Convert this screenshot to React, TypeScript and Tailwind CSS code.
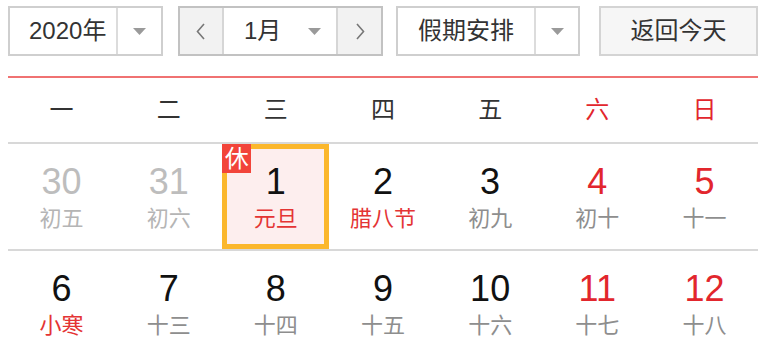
import React from "react";

type Cell = {
  d: string;
  l: string;
  dc: string;
  lc: string;
  sel?: boolean;
};

const BLACK = "text-[#111111]";
const RED = "text-[#e2262d]";
const GRAY = "text-[#bdbdbd]";
const LGRAY = "text-[#8e8e8e]";
const LRED = "text-[#e43434]";

const rows: Cell[][] = [
  [
    { d: "30", l: "初五", dc: GRAY, lc: "text-[#b5b5b5]" },
    { d: "31", l: "初六", dc: GRAY, lc: "text-[#b5b5b5]" },
    { d: "1", l: "元旦", dc: BLACK, lc: LRED, sel: true },
    { d: "2", l: "腊八节", dc: BLACK, lc: LRED },
    { d: "3", l: "初九", dc: BLACK, lc: LGRAY },
    { d: "4", l: "初十", dc: RED, lc: LGRAY },
    { d: "5", l: "十一", dc: RED, lc: LGRAY },
  ],
  [
    { d: "6", l: "小寒", dc: BLACK, lc: LRED },
    { d: "7", l: "十三", dc: BLACK, lc: LGRAY },
    { d: "8", l: "十四", dc: BLACK, lc: LGRAY },
    { d: "9", l: "十五", dc: BLACK, lc: LGRAY },
    { d: "10", l: "十六", dc: BLACK, lc: LGRAY },
    { d: "11", l: "十七", dc: RED, lc: LGRAY },
    { d: "12", l: "十八", dc: RED, lc: LGRAY },
  ],
];

const Tri = () => (
  <svg width="13" height="7" viewBox="0 0 13 7">
    <path d="M0 0 L13 0 L6.5 7 Z" fill="#9a9a9a" />
  </svg>
);

const Chev = ({ right }: { right?: boolean }) => (
  <svg width="10" height="17" viewBox="0 0 10 17">
    <path
      d={right ? "M2 1 L8.5 8.5 L2 16" : "M8 1 L1.5 8.5 L8 16"}
      fill="none"
      stroke="#777777"
      strokeWidth="1.6"
    />
  </svg>
);

export default function App() {
  const font = { fontFamily: '"Liberation Sans", Arial, "Noto Sans CJK SC", sans-serif' };
  return (
    <div className="w-[777px] h-[355px] overflow-hidden bg-white pl-[8px] pt-[6px]" style={font}>
      <div className="w-[750px]">
        {/* controls */}
        <div className="flex h-[50px] text-[24px] text-[#333333]">
          <div className="flex w-[155px] border-2 border-[#cfcfcf] bg-white">
            <div className="w-[106px] flex items-center pl-[19px]">2020年</div>
            <div className="flex-1 border-l-2 border-[#dcdcdc] flex items-center justify-center">
              <Tri />
            </div>
          </div>
          <div className="ml-[15px] flex w-[205px] border-2 border-[#c2c2c2]">
            <div className="w-[42px] bg-[#f2f2f2] flex items-center justify-center">
              <Chev />
            </div>
            <div className="w-[116px] border-x-2 border-[#d6d6d6] bg-white flex items-center pl-[20px]">
              <span>1月</span>
              <span className="ml-[27px] flex">
                <Tri />
              </span>
            </div>
            <div className="flex-1 bg-[#f2f2f2] flex items-center justify-center">
              <Chev right />
            </div>
          </div>
          <div className="ml-[13px] flex w-[184px] border-2 border-[#cfcfcf] bg-white">
            <div className="w-[136px] flex items-center justify-center">假期安排</div>
            <div className="flex-1 border-l-2 border-[#dcdcdc] flex items-center justify-center">
              <Tri />
            </div>
          </div>
          <div className="ml-[19px] w-[159px] border-2 border-[#d4d4d4] bg-[#f6f6f6] flex items-center justify-center">
            返回今天
          </div>
        </div>

        {/* red line */}
        <div className="mt-[20px] h-[2px] bg-[#f07272]" />

        {/* weekday header */}
        <div className="grid grid-cols-7 h-[64px] items-center text-[24px]">
          {["一", "二", "三", "四", "五", "六", "日"].map((w, i) => (
            <div
              key={w}
              className={`text-center ${i >= 5 ? "text-[#e2262d]" : "text-[#333333]"}`}
            >
              {w}
            </div>
          ))}
        </div>
        <div className="h-[2px] bg-[#d8d8d8]" />

        {rows.map((row, ri) => (
          <div key={ri}>
            <div className="grid grid-cols-7 h-[105px]">
              {row.map((c) => (
                <div
                  key={c.d}
                  className={
                    c.sel
                      ? "relative flex flex-col items-center pt-[13px] border-[5px] border-[#fbb72c] bg-[#fdeeee]"
                      : "relative flex flex-col items-center pt-[18px]"
                  }
                >
                  {c.sel && (
                    <div className="absolute left-[-5px] top-[-5px] w-[29px] h-[29px] bg-[#f2443a] text-white text-[24px] leading-[29px] text-center">
                      休
                    </div>
                  )}
                  <div className={`text-[36px] leading-[40px] ${c.dc}`}>{c.d}</div>
                  <div className={`mt-[4px] text-[22px] leading-[26px] ${c.lc}`}>{c.l}</div>
                </div>
              ))}
            </div>
            <div className="h-[2px] bg-[#d8d8d8]" />
          </div>
        ))}
      </div>
    </div>
  );
}
